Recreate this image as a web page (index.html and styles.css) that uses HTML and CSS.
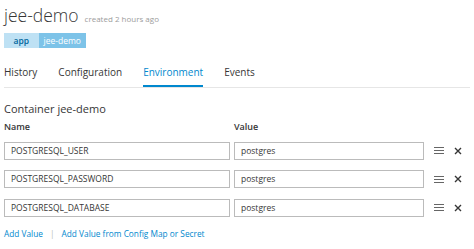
FILE: index.html
```html
<!DOCTYPE html>
<html>
<head>
<meta charset="utf-8">
<link rel="stylesheet" href="styles.css">
</head>
<body>
<div class="page">
  <div class="title-row">
    <h1 class="title">jee-demo</h1>
    <span class="created">created 2 hours ago</span>
  </div>
  <div class="labels">
    <span class="label-key">app</span><span class="label-value">jee-demo</span>
  </div>
  <nav class="tabs">
    <span class="tab">History</span>
    <span class="tab">Configuration</span>
    <span class="tab active">Environment</span>
    <span class="tab">Events</span>
  </nav>
  <h2 class="container-title">Container jee-demo</h2>
  <div class="env-grid">
    <div class="col-head">Name</div>
    <div class="col-head">Value</div>
    <div></div>

    <div class="field">POSTGRESQL_USER</div>
    <div class="field">postgres</div>
    <div class="actions"><span class="icon-bars"><i></i><i></i><i></i></span><svg class="icon-x" viewBox="0 0 8 8" width="8" height="8"><path d="M1 1L7 7M7 1L1 7"/></svg></div>

    <div class="field">POSTGRESQL_PASSWORD</div>
    <div class="field">postgres</div>
    <div class="actions"><span class="icon-bars"><i></i><i></i><i></i></span><svg class="icon-x" viewBox="0 0 8 8" width="8" height="8"><path d="M1 1L7 7M7 1L1 7"/></svg></div>

    <div class="field">POSTGRESQL_DATABASE</div>
    <div class="field">postgres</div>
    <div class="actions"><span class="icon-bars"><i></i><i></i><i></i></span><svg class="icon-x" viewBox="0 0 8 8" width="8" height="8"><path d="M1 1L7 7M7 1L1 7"/></svg></div>
  </div>
  <div class="links">
    <a class="link">Add Value</a>
    <span class="sep">|</span>
    <a class="link">Add Value from Config Map or Secret</a>
  </div>
</div>
</body>
</html>
```

FILE: styles.css
```css
html, body {
  margin: 0;
  padding: 0;
  background: #fff;
}
body {
  font-family: "Open Sans", "Noto Sans", sans-serif;
  color: #363636;
}
.page {
  padding: 0 4px;
}
.title-row {
  display: flex;
  align-items: baseline;
  gap: 6px;
  padding-top: 4px;
}
.title {
  margin: 0;
  font-size: 17.5px;
  font-weight: 300;
  line-height: 22px;
  color: #363636;
}
.created {
  font-size: 8px;
  color: #9c9c9c;
}
.labels {
  display: flex;
  margin-top: 7px;
  font-size: 8.5px;
  font-weight: 600;
  line-height: 15px;
}
.label-key {
  background: #bee1f4;
  color: #00659c;
  padding: 0 9.5px;
}
.label-value {
  background: #7dc3e8;
  color: #fff;
  padding: 0 5px;
  font-weight: 400;
}
.tabs {
  display: flex;
  gap: 21px;
  margin-top: 16px;
  border-bottom: 1px solid #e6e6e6;
  font-size: 10px;
  line-height: 17px;
}
.tab {
  padding-bottom: 6px;
  color: #363636;
}
.tab.active {
  color: #0088ce;
  box-shadow: inset 0 -2px 0 #0088ce;
}
.container-title {
  margin: 12px 0 0;
  font-size: 11px;
  font-weight: 400;
  line-height: 18px;
}
.env-grid {
  display: grid;
  grid-template-columns: 226px 190px 1fr;
  column-gap: 4px;
  row-gap: 10.5px;
  margin-top: 2px;
  align-items: center;
}
.col-head {
  font-size: 9px;
  font-weight: 600;
  line-height: 13px;
  margin-bottom: -2px;
}
.field {
  border: 1px solid #bbb;
  height: 16px;
  line-height: 16px;
  padding: 0 6px;
  font-size: 8.5px;
  color: #363636;
}
.actions {
  display: flex;
  align-items: center;
  gap: 10px;
  padding-left: 6px;
}
.icon-bars {
  display: flex;
  flex-direction: column;
  gap: 2px;
  width: 10px;
}
.icon-bars i {
  display: block;
  height: 1px;
  background: #666;
}
.icon-x {
  display: block;
  stroke: #363636;
  stroke-width: 1.4;
  fill: none;
}
.links {
  display: flex;
  gap: 7px;
  margin-top: 10px;
  font-size: 8.3px;
  line-height: 13px;
}
.link {
  color: #0088ce;
}
.sep {
  color: #bbb;
}
```
